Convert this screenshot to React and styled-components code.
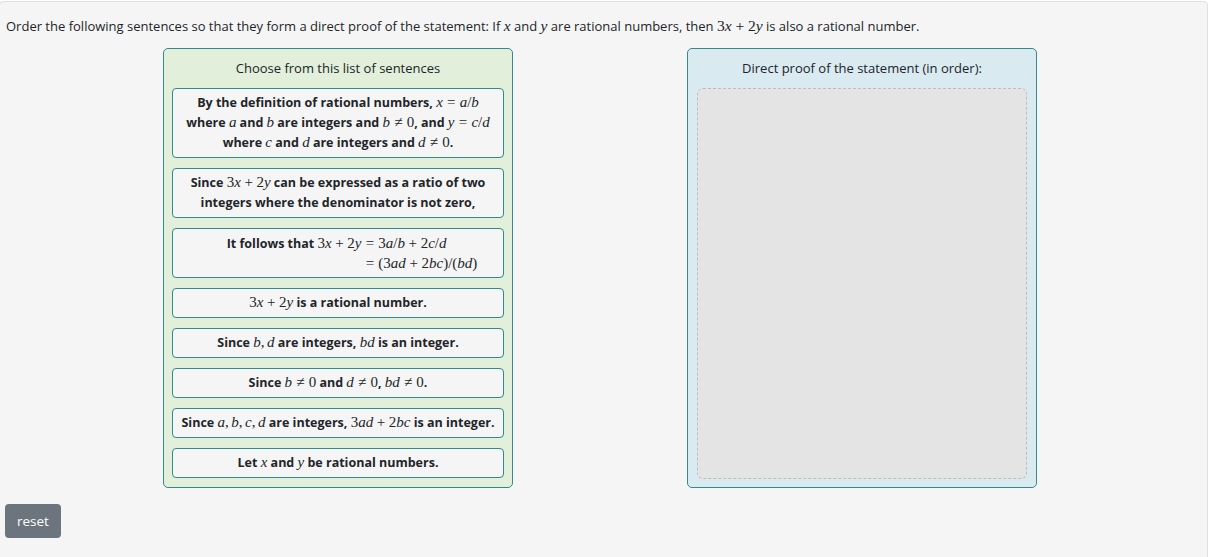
import React from 'react';
import styled, { createGlobalStyle } from 'styled-components';

const GlobalStyle = createGlobalStyle`
	body {
		margin: 0;
		background: #ffffff;
		font-family: "Open Sans", "Noto Sans", sans-serif;
		color: #212529;
	}
`;

const Page = styled.div`
	margin: 1px 2px 0 -1px;
	min-height: 600px;
	background: #f5f5f5;
	border: 1px solid #e0e0e0;
	border-radius: 4px;
	padding: 14px 5px 0 6px;
	box-sizing: border-box;
`;

const Prompt = styled.div`
	font-size: 13px;
	line-height: 20px;
`;

const Columns = styled.div`
	display: flex;
	gap: 174px;
	margin-top: 12px;
	padding-left: 157px;
`;

const Panel = styled.div`
	width: 350px;
	box-sizing: border-box;
	border: 1px solid #338a8c;
	border-radius: 5px;
	padding: 9px 8px 8px;
	background: ${props => props.tone === 'blue' ? '#daeaf1' : '#e2efda'};
	display: flex;
	flex-direction: column;
	gap: 10px;
`;

const PanelTitle = styled.div`
	font-size: 13px;
	line-height: 20px;
	text-align: center;
`;

const Sentence = styled.div`
	border: 1px solid #338a8c;
	border-radius: 4px;
	background: #f5f5f5;
	padding: 4px 6px;
	font-size: 12.5px;
	font-weight: 700;
	line-height: 20px;
	text-align: center;
	white-space: nowrap;
`;

const DropZone = styled.div`
	flex: 1;
	min-height: 389px;
	margin: 0 1px;
	border: 1px dashed #bdbdbd;
	border-radius: 6px;
	background: #e4e4e4;
`;

const ResetButton = styled.button`
	margin-top: 16px;
	margin-left: -1px;
	padding: 0 12px;
	height: 34px;
	border: none;
	border-radius: 4px;
	background: #6c757d;
	color: #ffffff;
	font-family: inherit;
	font-size: 13.5px;
	cursor: pointer;
`;

const M = styled.span`
	font-family: "Liberation Serif", "DejaVu Serif", serif;
	font-weight: 400;
	font-size: 1.2em;
	line-height: 0;
	white-space: nowrap;
`;

const V = styled.i`
	font-style: italic;
`;

const Op = styled.span`
	margin: 0 0.24em;
`;

const Rel = styled.span`
	margin: 0 0.28em;
`;

const Comma = styled.span`
	margin-right: 0.17em;
`;

const Aligned = styled.span`
	display: inline-grid;
	grid-template-columns: auto auto;
	vertical-align: baseline;
	text-align: left;
	margin-right: -28px;
	line-height: 20px;
`;

const AlignLeft = styled.span`
	text-align: right;
`;

const ThreeXTwoY = () => (
	<>3<V>x</V><Op>+</Op>2<V>y</V></>
);

const sentences = [
	<>
		By the definition of rational numbers, <M><V>x</V><Rel>=</Rel><V>a</V>/<V>b</V></M><br />
		where <M><V>a</V></M> and <M><V>b</V></M> are integers and <M><V>b</V><Rel>≠</Rel>0</M>, and <M><V>y</V><Rel>=</Rel><V>c</V>/<V>d</V></M><br />
		where <M><V>c</V></M> and <M><V>d</V></M> are integers and <M><V>d</V><Rel>≠</Rel>0</M>.
	</>,
	<>
		Since <M><ThreeXTwoY /></M> can be expressed as a ratio of two<br />
		integers where the denominator is not zero,
	</>,
	<>
		It follows that{' '}
		<M>
			<Aligned>
				<AlignLeft><ThreeXTwoY /></AlignLeft>
				<span><Rel>=</Rel>3<V>a</V>/<V>b</V><Op>+</Op>2<V>c</V>/<V>d</V></span>
				<AlignLeft />
				<span><Rel>=</Rel>(3<V>ad</V><Op>+</Op>2<V>bc</V>)/(<V>bd</V>)</span>
			</Aligned>
		</M>
	</>,
	<><M><ThreeXTwoY /></M> is a rational number.</>,
	<>Since <M><V>b</V><Comma>,</Comma><V>d</V></M> are integers, <M><V>bd</V></M> is an integer.</>,
	<>Since <M><V>b</V><Rel>≠</Rel>0</M> and <M><V>d</V><Rel>≠</Rel>0</M>, <M><V>bd</V><Rel>≠</Rel>0</M>.</>,
	<>Since <M><V>a</V><Comma>,</Comma><V>b</V><Comma>,</Comma><V>c</V><Comma>,</Comma><V>d</V></M> are integers, <M>3<V>ad</V><Op>+</Op>2<V>bc</V></M> is an integer.</>,
	<>Let <M><V>x</V></M> and <M><V>y</V></M> be rational numbers.</>,
];

const App = () => {
	return (
		<>
			<GlobalStyle />
			<Page>
				<Prompt>
					Order the following sentences so that they form a direct proof of the statement: If <M><V>x</V></M> and <M><V>y</V></M> are rational numbers, then <M><ThreeXTwoY /></M> is also a rational number.
				</Prompt>
				<Columns>
					<Panel>
						<PanelTitle>Choose from this list of sentences</PanelTitle>
						{sentences.map((s, i) => (
							<Sentence key={i}>{s}</Sentence>
						))}
					</Panel>
					<Panel tone="blue">
						<PanelTitle>Direct proof of the statement (in order):</PanelTitle>
						<DropZone />
					</Panel>
				</Columns>
				<ResetButton>reset</ResetButton>
			</Page>
		</>
	);
};

export default App;
